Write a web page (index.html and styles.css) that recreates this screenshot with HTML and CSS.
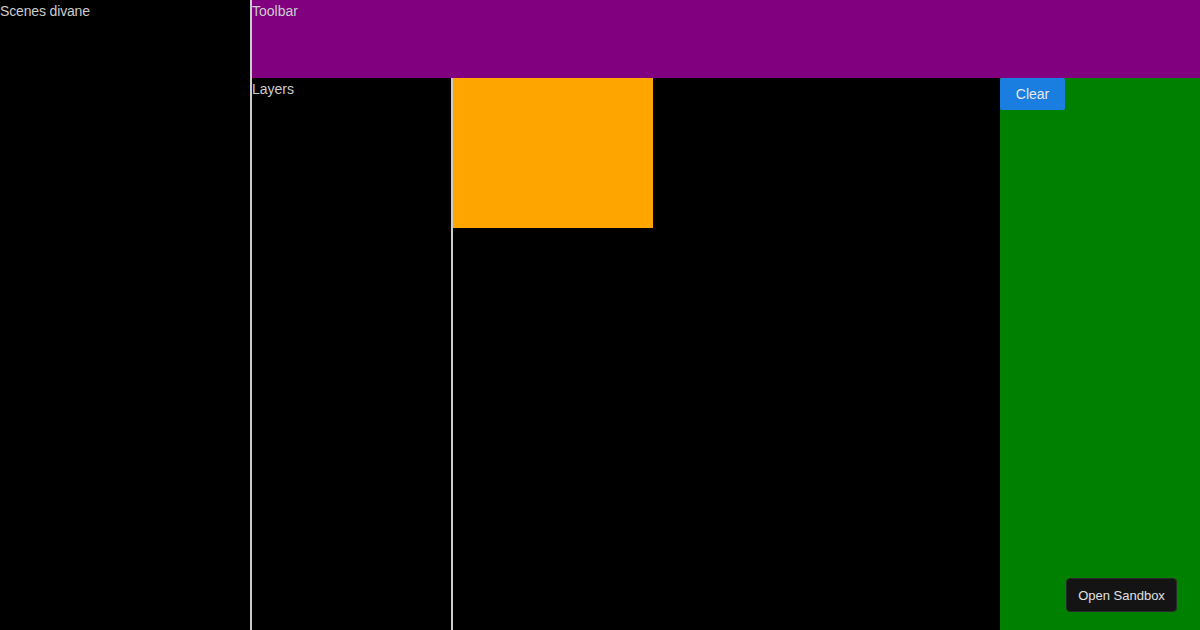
FILE: index.html
```html
<!DOCTYPE html>
<html>
<head>
<meta charset="utf-8">
<link rel="stylesheet" href="styles.css">
</head>
<body>
<div class="app">
  <aside class="scenes">Scenes divane</aside>
  <div class="main">
    <header class="toolbar">Toolbar</header>
    <div class="work">
      <section class="layers">Layers</section>
      <section class="canvas"><div class="shape"></div></section>
      <section class="props"><button class="clear">Clear</button></section>
    </div>
  </div>
</div>
<button class="sandbox">Open Sandbox</button>
</body>
</html>
```
FILE: styles.css
```css
html, body { margin: 0; padding: 0; background: #000; }
body {
  font-family: "Liberation Sans", Arial, sans-serif;
  font-size: 14px;
  color: #cccccc;
  width: 1200px;
  height: 630px;
  overflow: hidden;
}
.app { display: flex; height: 630px; }
.scenes {
  width: 250px;
  border-right: 2px solid #cccccc;
  background: #000;
  line-height: 22px;
  letter-spacing: -0.15px;
}
.main { flex: 1; display: flex; flex-direction: column; }
.toolbar {
  height: 78px;
  background: #800080;
  line-height: 22px;
}
.toolbar, .layers { box-sizing: border-box; }
.work { flex: 1; display: flex; }
.layers {
  width: 201px;
  border-right: 2px solid #cccccc;
  line-height: 22px;
}
.canvas { flex: 1; }
.shape { width: 200px; height: 150px; background: #ffa500; }
.props { width: 200px; background: #008000; }
.clear {
  display: block;
  width: 65px;
  height: 32px;
  border: 0;
  border-radius: 2px;
  background: #1a7ee0;
  color: #e8e8e8;
  font-family: "Liberation Sans", Arial, sans-serif;
  font-size: 14px;
  padding: 0;
  margin: 0;
}
.sandbox {
  position: fixed;
  right: 23px;
  bottom: 18px;
  width: 111px;
  height: 34px;
  background: #141414;
  border: 1px solid #2a2a2a;
  border-radius: 4px;
  color: #e0e0e0;
  font-family: "Liberation Sans", Arial, sans-serif;
  font-size: 13px;
  padding: 0;
}
```
